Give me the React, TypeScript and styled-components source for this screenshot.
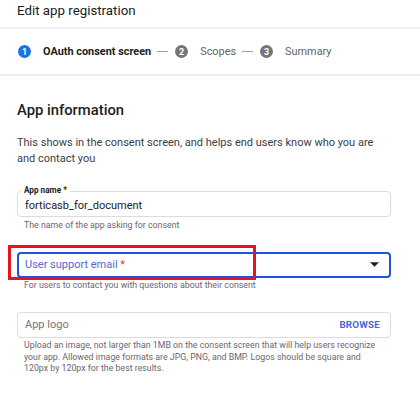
import styled, { createGlobalStyle } from 'styled-components'

const GlobalStyle = createGlobalStyle`
    body {
        margin: 0;
        background: #ffffff;
        font-family: Roboto, "Liberation Sans", Arial, sans-serif;
        color: #202124;
    }
`

const Page = styled.div`
    width: 420px;
    height: 399px;
    overflow: hidden;
    background: #fff;
`

// page title bar
const TitleBar = styled.header`
    height: 29px;
    display: flex;
    align-items: center;
    padding-left: 17px;
    font-size: 13.3px;
    color: #202124;
    border-bottom: 2px solid #eeeeee;
    box-sizing: border-box;
    padding-bottom: 6px;
`

// step indicator row
const Stepper = styled.nav`
    height: 47px;
    display: flex;
    align-items: center;
    padding-left: 18px;
    border-bottom: 2px solid #eeeeee;
    box-sizing: border-box;
    font-size: 10.9px;
`

const StepNum = styled.span<{ $active?: boolean }>`
    width: 13px;
    height: 13px;
    border-radius: 50%;
    background: ${p => (p.$active ? '#1a73e8' : '#757575')};
    color: #fff;
    font-size: 9px;
    font-weight: 700;
    display: inline-flex;
    align-items: center;
    justify-content: center;
    margin-right: 12px;
`

const StepLabel = styled.span<{ $active?: boolean }>`
    font-weight: ${p => (p.$active ? 700 : 400)};
    color: ${p => (p.$active ? '#202124' : '#5f6368')};
`

const StepDash = styled.span`
    width: 11px;
    height: 1px;
    background: #9aa0a6;
    margin: 0 7px 0 6px;
`

const Content = styled.main`
    padding: 0 29px 0 17px;
`

const Heading = styled.h1`
    margin: 24px 0 0;
    font-size: 14.8px;
    font-weight: 500;
    line-height: 20px;
    color: #202124;
`

const Description = styled.p`
    margin: 15px 0 0;
    max-width: 362px;
    font-size: 11px;
    line-height: 16px;
    color: #3c4043;
`

const Field = styled.div<{ $gap: number }>`
    position: relative;
    margin-top: ${p => p.$gap}px;
`

const Box = styled.div<{ $focused?: boolean }>`
    height: 26px;
    box-sizing: border-box;
    border: ${p => (p.$focused ? '2px solid #1a56db' : '1px solid #dadce0')};
    border-radius: 4px;
    display: flex;
    align-items: center;
    padding: 0 ${p => (p.$focused ? '10px 0 6px' : '10px 0 7px')};
    font-size: 11px;
`

const FloatLabel = styled.span`
    position: absolute;
    left: 4px;
    top: -6px;
    padding: 0 3px;
    background: #fff;
    font-size: 8.2px;
    font-weight: 700;
    color: #202124;
    line-height: 11px;
`

const Value = styled.span`
    color: #202124;
    padding-top: 2px;
`

const Placeholder = styled.span<{ $blue?: boolean }>`
    flex: 1;
    color: ${p => (p.$blue ? '#5468d4' : '#757575')};
`

const Required = styled.span`
    color: #e53935;
`

const Browse = styled.span`
    color: #4a66d8;
    font-weight: 700;
    font-size: 9.8px;
    letter-spacing: 0.2px;
`

const Helper = styled.div`
    margin-top: 2.5px;
    padding: 0 12px 0 7px;
    font-size: 8.8px;
    line-height: 11.5px;
    color: #6b6574;
`

// red annotation frame drawn over the email field
const Highlight = styled.div`
    position: absolute;
    left: -9px;
    top: -7px;
    width: 248px;
    height: 35px;
    border: 3px solid #e5141e;
    box-sizing: border-box;
    pointer-events: none;
`

const steps = ['OAuth consent screen', 'Scopes', 'Summary']

function App() {
    return (
        <>
            <GlobalStyle />
            <Page>
                <TitleBar>Edit app registration</TitleBar>
                <Stepper>
                    {steps.map((s, i) => (
                        <span key={s} style={{ display: 'contents' }}>
                            {i > 0 && <StepDash />}
                            <StepNum $active={i === 0}>{i + 1}</StepNum>
                            <StepLabel $active={i === 0}>{s}</StepLabel>
                        </span>
                    ))}
                </Stepper>
                <Content>
                    <Heading>App information</Heading>
                    <Description>
                        This shows in the consent screen, and helps end users know who you are and contact you
                    </Description>

                    <Field $gap={24}>
                        <Box>
                            <Value>forticasb_for_document</Value>
                        </Box>
                        <FloatLabel>App name *</FloatLabel>
                        <Helper>The name of the app asking for consent</Helper>
                    </Field>

                    <Field $gap={20.5}>
                        <Box $focused>
                            <Placeholder $blue>
                                User support email <Required>*</Required>
                            </Placeholder>
                            <svg width="9" height="5" viewBox="0 0 10 5">
                                <path d="M0 0 L5 5 L10 0 Z" fill="#202124" />
                            </svg>
                        </Box>
                        <Highlight />
                        <Helper>For users to contact you with questions about their consent</Helper>
                    </Field>

                    <Field $gap={20}>
                        <Box>
                            <Placeholder>App logo</Placeholder>
                            <Browse>BROWSE</Browse>
                        </Box>
                        <Helper>
                            Upload an image, not larger than 1MB on the consent screen that will help users recognize
                            your app. Allowed image formats are JPG, PNG, and BMP. Logos should be square and 120px by
                            120px for the best results.
                        </Helper>
                    </Field>
                </Content>
            </Page>
        </>
    )
}

export default App
